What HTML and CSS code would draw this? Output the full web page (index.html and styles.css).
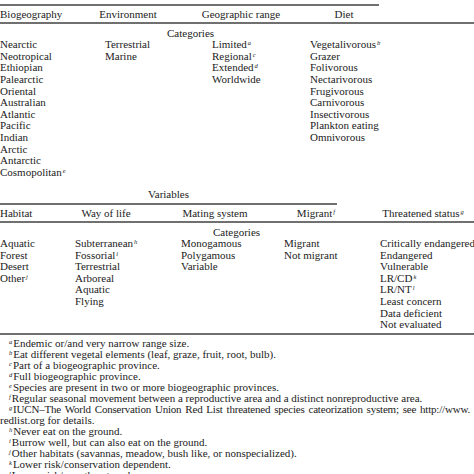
FILE: index.html
```html
<!DOCTYPE html>
<html>
<head>
<meta charset="utf-8">
<link rel="stylesheet" href="styles.css">
</head>
<body>
<div class="page">
  <div class="rule rule-top"></div>
  <div class="head head1">
    <div class="hc left">Biogeography</div>
    <div class="hc">Environment</div>
    <div class="hc">Geographic range</div>
    <div class="hc">Diet</div>
  </div>
  <div class="rule"></div>
  <div class="cat cat1">Categories</div>
  <div class="data data1">
    <div class="col">
      <div>Nearctic</div><div>Neotropical</div><div>Ethiopian</div><div>Palearctic</div>
      <div>Oriental</div><div>Australian</div><div>Atlantic</div><div>Pacific</div>
      <div>Indian</div><div>Arctic</div><div>Antarctic</div><div>Cosmopolitan<sup class="m">e</sup></div>
    </div>
    <div class="col">
      <div>Terrestrial</div><div>Marine</div>
    </div>
    <div class="col">
      <div>Limited<sup class="m">a</sup></div><div>Regional<sup class="m">c</sup></div>
      <div>Extended<sup class="m">d</sup></div><div>Worldwide</div>
    </div>
    <div class="col">
      <div>Vegetalivorous<sup class="m">b</sup></div><div>Grazer</div><div>Folivorous</div>
      <div>Nectarivorous</div><div>Frugivorous</div><div>Carnivorous</div>
      <div>Insectivorous</div><div>Plankton eating</div><div>Omnivorous</div>
    </div>
  </div>

  <div class="spanner">Variables</div>
  <div class="rule rule-span"></div>
  <div class="head head2">
    <div class="hc left">Habitat</div>
    <div class="hc">Way of life</div>
    <div class="hc">Mating system</div>
    <div class="hc">Migrant<sup class="m">f</sup></div>
    <div class="hc shift">Threatened status<sup class="m">g</sup></div>
  </div>
  <div class="rule"></div>
  <div class="cat cat2">Categories</div>
  <div class="data data2">
    <div class="col">
      <div>Aquatic</div><div>Forest</div><div>Desert</div><div>Other<sup class="m">j</sup></div>
    </div>
    <div class="col">
      <div>Subterranean<sup class="m">h</sup></div><div>Fossorial<sup class="m">i</sup></div>
      <div>Terrestrial</div><div>Arboreal</div><div>Aquatic</div><div>Flying</div>
    </div>
    <div class="col">
      <div>Monogamous</div><div>Polygamous</div><div>Variable</div>
    </div>
    <div class="col">
      <div>Migrant</div><div>Not migrant</div>
    </div>
    <div class="col">
      <div>Critically endangered</div><div>Endangered</div><div>Vulnerable</div>
      <div>LR/CD<sup class="m">k</sup></div><div>LR/NT<sup class="m">l</sup></div>
      <div>Least concern</div><div>Data deficient</div><div>Not evaluated</div>
    </div>
  </div>
  <div class="rule rule-bottom"></div>

  <div class="notes">
    <p class="fn"><sup class="m">a</sup>Endemic or/and very narrow range size.</p>
    <p class="fn"><sup class="m">b</sup>Eat different vegetal elements (leaf, graze, fruit, root, bulb).</p>
    <p class="fn"><sup class="m">c</sup>Part of a biogeographic province.</p>
    <p class="fn"><sup class="m">d</sup>Full biogeographic province.</p>
    <p class="fn"><sup class="m">e</sup>Species are present in two or more biogeographic provinces.</p>
    <p class="fn"><sup class="m">f</sup>Regular seasonal movement between a reproductive area and a distinct nonreproductive area.</p>
    <p class="fn just"><sup class="m">g</sup>IUCN–The World Conservation Union Red List threatened species cateorization system; see http://www.</p>
    <p class="fn cont">redlist.org for details.</p>
    <p class="fn"><sup class="m">h</sup>Never eat on the ground.</p>
    <p class="fn"><sup class="m">i</sup>Burrow well, but can also eat on the ground.</p>
    <p class="fn"><sup class="m">j</sup>Other habitats (savannas, meadow, bush like, or nonspecialized).</p>
    <p class="fn"><sup class="m">k</sup>Lower risk/conservation dependent.</p>
    <p class="fn"><sup class="m">l</sup>Lower risk/near threatened.</p>
  </div>
</div>
</body>
</html>
```

FILE: styles.css
```css
html, body {
  margin: 0;
  padding: 0;
  background: #ffffff;
}

.page {
  width: 474px;
  height: 474px;
  overflow: hidden;
  padding-top: 4px;
  box-sizing: border-box;
  font-family: "Liberation Serif", "Times New Roman", serif;
  font-size: 11px;
  line-height: 11.6px;
  color: #222222;
}

.rule {
  height: 2px;
  background: #707070;
  width: 474px;
}

.rule-top {
  width: 379px;
}

.rule-span {
  width: 337px;
}

.head {
  display: grid;
  padding: 3px 0 1px;
}

.head1 {
  grid-template-columns: 75px 106px 120px 86px;
}

.head2 {
  grid-template-columns: 60px 92px 126px 76px 120px;
}

.hc {
  text-align: center;
  white-space: nowrap;
}

.hc.left {
  text-align: left;
}

.hc.shift {
  padding-left: 18px;
}

.cat {
  padding-top: 4px;
  white-space: nowrap;
}

.cat1 {
  padding-left: 167px;
}

.cat2 {
  padding-left: 213px;
}

.data {
  display: grid;
}

.data1 {
  grid-template-columns: 105px 107px 98px 164px;
}

.data2 {
  grid-template-columns: 75px 106px 103px 96px 94px;
}

.col div {
  white-space: nowrap;
}

.spanner {
  width: 337px;
  text-align: center;
  padding-top: 11px;
  padding-bottom: 2px;
}

.rule-bottom {
  margin-top: 2px;
}

sup.m {
  font-size: 6.5px;
  font-style: italic;
  line-height: 0;
  vertical-align: 3px;
  margin-left: 1px;
}

.notes {
  padding-top: 3px;
  width: 470px;
}

.fn {
  margin: 0;
  line-height: 11px;
  text-indent: 9px;
  white-space: nowrap;
}

.fn sup.m {
  margin-left: 0;
  margin-right: 1px;
}

.fn.just {
  white-space: normal;
  text-align: justify;
  text-align-last: justify;
  letter-spacing: -0.2px;
  word-spacing: -1px;
}

.fn.cont {
  text-indent: 0;
}
```
